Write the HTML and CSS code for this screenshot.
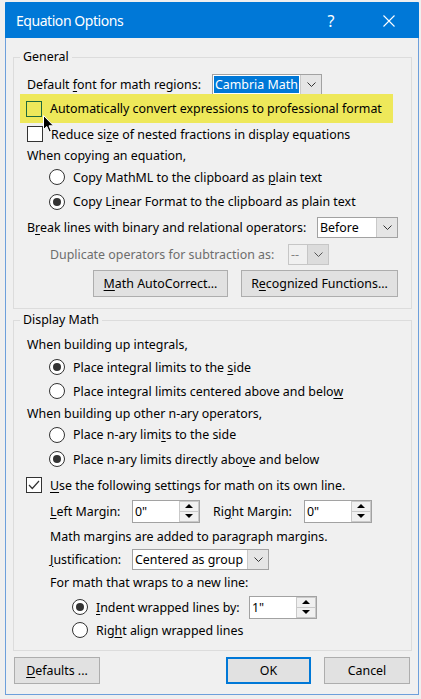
FILE: index.html
```html
<!DOCTYPE html>
<html>
<head>
<meta charset="utf-8">
<title>Equation Options</title>
<link rel="stylesheet" href="styles.css">
</head>
<body>
<div class="dialog">
  <div class="titlebar">
    <span class="title">Equation Options</span>
    <span class="help">?</span>
    <svg class="close" width="12" height="12" viewBox="0 0 12 12"><path d="M0.5 0.5 L11.5 11.5 M11.5 0.5 L0.5 11.5" stroke="#fff" stroke-width="1.1" fill="none"/></svg>
  </div>
  <div class="content">
    <fieldset class="group">
      <legend>General</legend>
      <div class="gbody gen">
        <div class="row mt9 h20">
          <span class="lbl w185">Default <u>f</u>ont for math regions:</span>
          <div class="select w110">
            <span class="val selected">Cambria Math</span>
            <span class="drop"><svg width="9" height="5" viewBox="0 0 9 5"><polyline points="0.5,0.5 4.5,4.5 8.5,0.5" fill="none" stroke="#333" stroke-width="1"/></svg></span>
          </div>
        </div>
        <div class="row h29 highlight">
          <span class="check hover"></span>
          <span>Automatically convert expressions to professional format</span>
          <svg class="cursor" width="12" height="19" viewBox="0 0 12 19"><path d="M0.5 0.5 L0.5 14.5 L3.8 11.5 L6.2 17 L8.3 16 L6 10.8 L10.5 10.8 Z" fill="#000" stroke="#fff" stroke-width="1"/></svg>
        </div>
        <div class="row h22">
          <span class="check"></span>
          <span>Reduce si<u>z</u>e of nested fractions in display equations</span>
        </div>
        <div class="row h20"><span>When copying an equation,</span></div>
        <div class="row h24 ind22">
          <span class="radio"></span>
          <span>Copy MathML to the clipboard as <u>p</u>lain text</span>
        </div>
        <div class="row h25 ind22">
          <span class="radio on"></span>
          <span>Copy L<u>i</u>near Format to the clipboard as plain text</span>
        </div>
        <div class="row h27">
          <span class="lbl w290">B<u>r</u>eak lines with binary and relational operators:</span>
          <div class="select w81">
            <span class="val">Before</span>
            <span class="drop"><svg width="9" height="5" viewBox="0 0 9 5"><polyline points="0.5,0.5 4.5,4.5 8.5,0.5" fill="none" stroke="#333" stroke-width="1"/></svg></span>
          </div>
        </div>
        <div class="row h26 ind23">
          <span class="lbl w238 disabled-text">Duplicate operators for subtraction as:</span>
          <div class="select w41 disabled">
            <span class="val">--</span>
            <span class="drop"><svg width="9" height="5" viewBox="0 0 9 5"><polyline points="0.5,0.5 4.5,4.5 8.5,0.5" fill="none" stroke="#555" stroke-width="1"/></svg></span>
          </div>
        </div>
        <div class="row h27 mt3 btnrow">
          <button class="btn w135"><span><u>M</u>ath AutoCorrect...</span></button>
          <button class="btn w157"><span>R<u>e</u>cognized Functions...</span></button>
        </div>
      </div>
    </fieldset>

    <fieldset class="group second">
      <legend>Display Math</legend>
      <div class="gbody disp">
        <div class="row mt5 h22"><span>When building up integrals,</span></div>
        <div class="row h24 ind22">
          <span class="radio on"></span>
          <span>Place integral limits to the <u>s</u>ide</span>
        </div>
        <div class="row h24 ind22">
          <span class="radio"></span>
          <span>Place integral limits centered above and belo<u>w</u></span>
        </div>
        <div class="row h20"><span>When building up other n-ary operators,</span></div>
        <div class="row h23 ind22">
          <span class="radio"></span>
          <span>Place n-ary limi<u>t</u>s to the side</span>
        </div>
        <div class="row h26 ind22">
          <span class="radio on"></span>
          <span>Place n-ary limits directly abo<u>v</u>e and below</span>
        </div>
        <div class="row h26 indm1">
          <span class="check"><svg width="14" height="14" viewBox="0 0 14 14"><polyline points="2,7 5.3,10.5 12,3" fill="none" stroke="#333" stroke-width="1.2"/></svg></span>
          <span><u>U</u>se the following settings for math on its own line.</span>
        </div>
        <div class="row h26 ind23">
          <span class="lbl w82"><u>L</u>eft Margin:</span>
          <div class="spin">
            <span class="val">0"</span>
            <span class="arrows"><span class="up"><i class="tri-up"></i></span><span class="down"><i class="tri-down"></i></span></span>
          </div>
          <span class="lbl w91 ml13">Ri<u>g</u>ht Margin:</span>
          <div class="spin">
            <span class="val">0"</span>
            <span class="arrows"><span class="up"><i class="tri-up"></i></span><span class="down"><i class="tri-down"></i></span></span>
          </div>
        </div>
        <div class="row h24 ind23"><span>Math margins are added to paragraph margins.</span></div>
        <div class="row h22 ind23">
          <span class="lbl w82"><u>J</u>ustification:</span>
          <div class="select w137">
            <span class="val">Centered as group</span>
            <span class="drop"><svg width="9" height="5" viewBox="0 0 9 5"><polyline points="0.5,0.5 4.5,4.5 8.5,0.5" fill="none" stroke="#333" stroke-width="1"/></svg></span>
          </div>
        </div>
        <div class="row h25 ind23"><span>For math that wraps to a new line:</span></div>
        <div class="row h24 ind45">
          <span class="radio on"></span>
          <span class="lbl w153"><u>I</u>ndent wrapped lines by:</span>
          <div class="spin">
            <span class="val">1"</span>
            <span class="arrows"><span class="up"><i class="tri-up"></i></span><span class="down"><i class="tri-down"></i></span></span>
          </div>
        </div>
        <div class="row h22 ind45">
          <span class="radio"></span>
          <span>Rig<u>h</u>t align wrapped lines</span>
        </div>
      </div>
    </fieldset>
  </div>
  <div class="footer">
    <button class="btn w86"><span><u>D</u>efaults ...</span></button>
    <span class="spacer"></span>
    <button class="btn w85 default">OK</button>
    <button class="btn w86">Cancel</button>
  </div>
</div>
</body>
</html>
```
FILE: styles.css
```css
* { box-sizing: border-box; }
html, body { margin: 0; padding: 0; }
body {
  width: 421px;
  height: 699px;
  overflow: hidden;
  background: #efefef;
  font-family: "Noto Sans", "Open Sans", sans-serif;
  font-size: 12.4px;
  color: #000;
}
u { text-decoration: underline; text-underline-offset: 2px; text-decoration-thickness: 1px; }

.dialog {
  margin: 2px 0 0 5px;
  width: 414px;
  border: 1px solid #6d9fdb;
  border-top-color: #0078d7;
  background: #f0f0f0;
  display: flex;
  flex-direction: column;
}
.titlebar {
  height: 35px;
  margin: 0 -1px;
  background: #0078d7;
  color: #fff;
  display: flex;
  align-items: center;
  padding-left: 11px;
}
.title { flex: 1; font-size: 14px; letter-spacing: -0.45px; }
.help { width: 14px; text-align: center; font-size: 16px; margin-right: 45px; }
.close { margin-right: 24px; }

.content { padding: 11px 6px 0 7px; }
.group { margin: 0; padding: 0; border: 1px solid #dcdcdc; min-width: 0; }
.group legend { margin-left: 6px; padding: 0 3px; line-height: 16px; height: 16px; }
.group.second { margin-top: 3px; }
.gbody { padding: 0 13px 11px 13px; }
.gbody.disp { padding-bottom: 9px; }

.row { display: flex; align-items: center; white-space: nowrap; position: relative; }
.h19 { height: 19px; } .h20 { height: 20px; } .h22 { height: 22px; } .h23 { height: 23px; }
.h24 { height: 24px; } .h25 { height: 25px; } .h26 { height: 26px; } .h27 { height: 27px; }
.h29 { height: 29px; }
.mt3 { margin-top: 3px; } .mt5 { margin-top: 5px; } .mt9 { margin-top: 9px; }
.ind22 { padding-left: 22px; } .ind23 { padding-left: 23px; } .ind45 { padding-left: 45px; }
.indm1 { margin-left: -1px; }
.ml13 { margin-left: 13px; }

.lbl { flex: none; }
.w82 { width: 82px; } .w91 { width: 91px; } .w153 { width: 153px; }
.w185 { width: 185px; } .w238 { width: 238px; } .w290 { width: 290px; }
.w41 { width: 41px; } .w81 { width: 81px; } .w85 { width: 85px; } .w86 { width: 86px; }
.w110 { width: 110px; } .w135 { width: 135px; } .w137 { width: 137px; } .w157 { width: 157px; }

.highlight {
  margin-left: -7px;
  width: 373px;
  padding-left: 6px;
  background: #eee85a;
}
.cursor { position: absolute; left: 23px; top: 21px; }

.check {
  width: 16px; height: 16px; flex: none;
  border: 1px solid #333;
  background: #fff;
  margin-right: 8px;
  display: flex; align-items: center; justify-content: center;
}
.check.hover { border-color: #1f6a3c; background: transparent; }
.radio {
  width: 16px; height: 16px; flex: none;
  border: 1px solid #333;
  border-radius: 50%;
  background: #fff;
  margin-right: 8px;
  display: flex; align-items: center; justify-content: center;
}
.radio.on::after { content: ""; width: 8px; height: 8px; border-radius: 50%; background: #333; }

.select {
  display: flex; height: 21px; flex: none;
  border: 1px solid #a2a2a2;
  background: #fff;
}
.select .val { flex: 1; display: flex; align-items: center; padding-left: 2px; overflow: hidden; }
.select .val.selected { background: #0078d7; color: #fff; margin: 1px 1px 1px 1px; padding-left: 1px; }
.select .drop {
  width: 21px; flex: none;
  background: #e5e5e5;
  border-left: 1px solid #c9c9c9;
  display: flex; align-items: center; justify-content: center;
}
.select.disabled { border-color: #c6c6c6; background: #f0f0f0; }
.select.disabled .val { color: #838383; }
.select.disabled .drop { background: #dcdcdc; border-left-color: #c6c6c6; }
.disabled-text { color: #6d6d6d; }

.spin {
  display: flex; width: 68px; height: 23px; flex: none;
  border: 1px solid #a2a2a2;
  background: #fff;
}
.spin .val { flex: 1; display: flex; align-items: center; padding-left: 2px; }
.spin .arrows { width: 20px; display: flex; flex-direction: column; }
.spin .arrows > span {
  flex: 1; display: flex; align-items: center; justify-content: center;
  background: #f0f0f0; border: 1px solid #c9c9c9;
}
.spin .arrows > .down { border-top: none; }
.tri-up { width: 0; height: 0; border-left: 4px solid transparent; border-right: 4px solid transparent; border-bottom: 4px solid #000; }
.tri-down { width: 0; height: 0; border-left: 4px solid transparent; border-right: 4px solid transparent; border-top: 4px solid #000; }

.btnrow { justify-content: flex-end; gap: 13px; }
.btn {
  height: 27px; flex: none;
  padding: 0;
  font: inherit; color: #000;
  background: #e1e1e1;
  border: 1px solid #adadad;
  display: flex; align-items: center; justify-content: center;
}
.btn.default { border: 2px solid #0078d7; }

.footer {
  display: flex; align-items: center; gap: 13px;
  margin-top: 6px;
  padding: 0 8px 10px 8px;
}
.footer .spacer { flex: 1; }
```
